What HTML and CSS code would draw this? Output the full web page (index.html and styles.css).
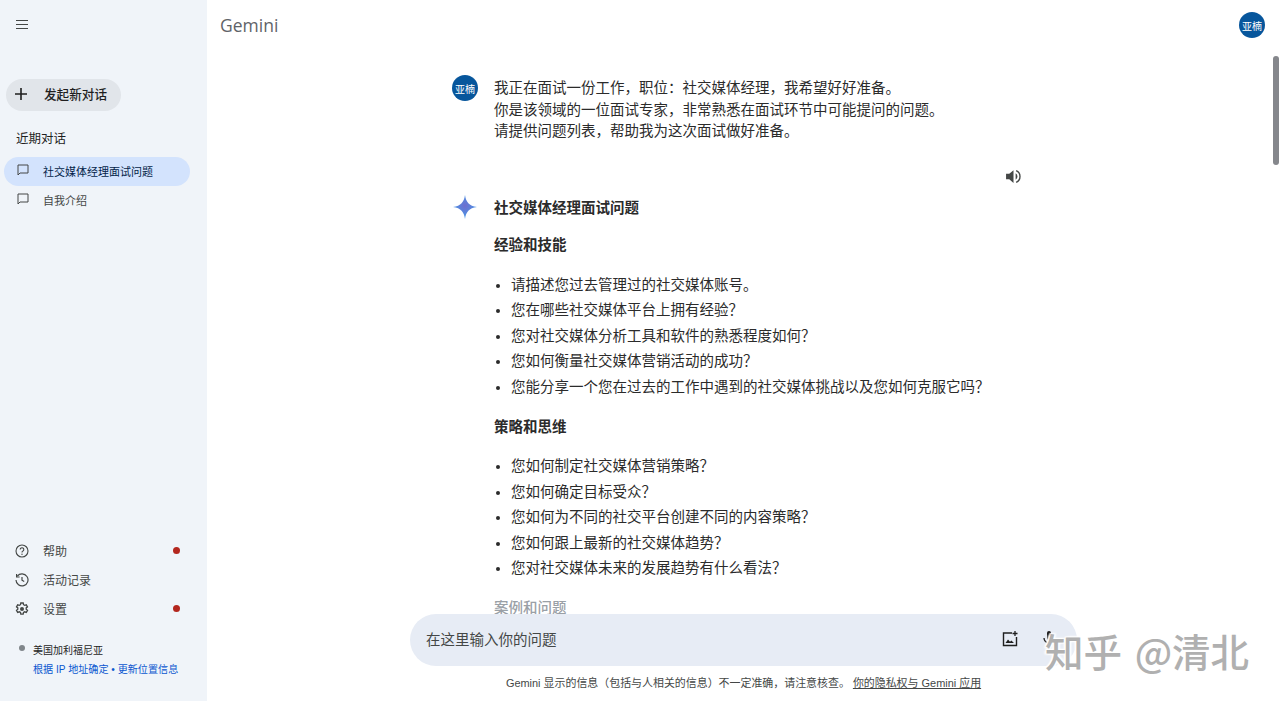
FILE: index.html
```html
<!DOCTYPE html>
<html lang="zh-CN">
<head>
  <meta charset="UTF-8" />
  <title>Gemini</title>
  <link rel="stylesheet" href="styles.css">
</head>
<body>
  <aside class="sidebar">
    <div class="menu-btn">
      <svg width="12" height="9" viewBox="0 0 12 9"><path d="M0 .5h12M0 4.500h12M0 8.500h12" stroke="#444746" stroke-width="1.200"/></svg>
    </div>
    <div class="new-chat">
      <svg width="14" height="14" viewBox="0 0 14 14"><path d="M7 1v12M1 7h12" stroke="#1f1f1f" stroke-width="1.600"/></svg>
      <span>发起新对话</span>
    </div>
    <div class="recent-title">近期对话</div>
    <div class="chat-item active">
      <svg class="chat-icon" width="12" height="12" viewBox="0 0 12 12"><path d="M1 1h10v8H3L1 11z" fill="none" stroke="#444746" stroke-width="1"/></svg>
      <span>社交媒体经理面试问题</span>
    </div>
    <div class="chat-item">
      <svg class="chat-icon" width="12" height="12" viewBox="0 0 12 12"><path d="M1 1h10v8H3L1 11z" fill="none" stroke="#444746" stroke-width="1"/></svg>
      <span>自我介绍</span>
    </div>

    <div class="side-bottom">
      <div class="side-link">
        <svg width="14" height="14" viewBox="0 0 14 14"><circle cx="7" cy="7" r="6" fill="none" stroke="#444746" stroke-width="1.100"/><path d="M5.200 5.500a1.800 1.800 0 1 1 2.700 1.600c-.6.300-.9.700-.9 1.300" fill="none" stroke="#444746" stroke-width="1.100"/><circle cx="7" cy="10.200" r=".7" fill="#444746"/></svg>
        <span>帮助</span>
        <i class="red-dot"></i>
      </div>
      <div class="side-link">
        <svg width="14" height="14" viewBox="0 0 14 14"><path d="M2.300 3.200A6 6 0 1 1 1 7" fill="none" stroke="#444746" stroke-width="1.200"/><path d="M1.600 1v3h3" fill="none" stroke="#444746" stroke-width="1.200"/><path d="M7 4v3.200l2.200 1.400" fill="none" stroke="#444746" stroke-width="1.200"/></svg>
        <span>活动记录</span>
      </div>
      <div class="side-link">
        <svg width="14" height="14" viewBox="0 0 14 14"><path d="M5.800 1h2.400l.3 1.700 1.200.7 1.600-.6 1.200 2-1.300 1.100v1.400l1.300 1.100-1.200 2-1.600-.6-1.200.7-.3 1.700H5.800l-.3-1.700-1.200-.7-1.600.6-1.200-2 1.300-1.100V5.900L1.500 4.800l1.200-2 1.600.6 1.200-.7z" fill="none" stroke="#444746" stroke-width="1.300"/><circle cx="7" cy="7" r="2" fill="#444746"/></svg>
        <span>设置</span>
        <i class="red-dot"></i>
      </div>
      <div class="location">
        <div class="loc-name"><i class="grey-dot"></i>美国加利福尼亚</div>
        <div class="loc-link">根据 IP 地址确定 • 更新位置信息</div>
      </div>
    </div>
  </aside>

  <main class="main">
    <header class="topbar">
      <div class="brand">Gemini</div>
      <div class="avatar">亚楠</div>
    </header>

    <div class="scroll-thumb"></div>

    <section class="conversation">
      <div class="prompt">
        <div class="avatar">亚楠</div>
        <p>我正在面试一份工作，职位：社交媒体经理，我希望好好准备。<br>你是该领域的一位面试专家，非常熟悉在面试环节中可能提问的问题。<br>请提供问题列表，帮助我为这次面试做好准备。</p>
      </div>
      <div class="speaker">
        <svg width="17" height="17" viewBox="0 0 16 16"><path d="M1 5.500h3L8 2v12L4 10.500H1z" fill="#444746"/><path d="M10 5a3.500 3.500 0 0 1 0 6z" fill="#444746"/><path d="M10.500 2.500a6 6 0 0 1 0 11" fill="none" stroke="#444746" stroke-width="1.300"/></svg>
      </div>
      <div class="answer">
        <svg class="spark" width="26" height="26" viewBox="0 0 26 26">
          <defs><radialGradient id="sparkFill" cx="0.500" cy="0.450" r="0.500"><stop offset="0" stop-color="#6f6ecf"/><stop offset="1" stop-color="#4a96e6"/></radialGradient></defs>
          <path d="M13 1c1 7 4 11 12 12-8 1-11 5-12 12-1-7-4-11-12-12 8-1 11-5 12-12z" fill="url(#sparkFill)"/>
        </svg>
        <div class="answer-body">
          <h2 class="first">社交媒体经理面试问题</h2>
          <h2>经验和技能</h2>
          <ul class="top">
            <li>请描述您过去管理过的社交媒体账号。</li>
            <li>您在哪些社交媒体平台上拥有经验？</li>
            <li>您对社交媒体分析工具和软件的熟悉程度如何？</li>
            <li>您如何衡量社交媒体营销活动的成功？</li>
            <li>您能分享一个您在过去的工作中遇到的社交媒体挑战以及您如何克服它吗？</li>
          </ul>
          <h2>策略和思维</h2>
          <ul class="last">
            <li>您如何制定社交媒体营销策略？</li>
            <li>您如何确定目标受众？</li>
            <li>您如何为不同的社交平台创建不同的内容策略？</li>
            <li>您如何跟上最新的社交媒体趋势？</li>
            <li>您对社交媒体未来的发展趋势有什么看法？</li>
          </ul>
          <h2 class="faded">案例和问题</h2>
        </div>
      </div>
    </section>

    <div class="composer">
      <div class="input-bar">
        <span class="placeholder">在这里输入你的问题</span>
        <svg class="image-icon" width="16" height="16" viewBox="0 0 16 16"><path d="M10 2H1.500v12.500h13V6" fill="none" stroke="#1f1f1f" stroke-width="1.400"/><path d="M3.500 12l2.500-3.500 2 2.300 1.300-1.300 2.700 2.500z" fill="#1f1f1f"/><path d="M13 0v5M10.500 2.500h5" stroke="#1f1f1f" stroke-width="1.300"/></svg>
        <svg class="mic-icon" width="14" height="18" viewBox="0 0 14 18"><rect x="5" y="1" width="4" height="9" rx="2" fill="#1f1f1f"/><path d="M2 8a5 5 0 0 0 10 0M7 13v4" fill="none" stroke="#1f1f1f" stroke-width="1.300"/></svg>
      </div>
      <p class="disclaimer">Gemini 显示的信息（包括与人相关的信息）不一定准确，请注意核查。 <a href="#">你的隐私权与 Gemini 应用</a></p>
    </div>

    <div class="watermark">知乎 @清北</div>
  </main>
</body>
</html>
```

FILE: styles.css
```css
* { box-sizing: border-box; }
html, body {
  height: 100%;
}
body {
  margin: 0;
  display: flex;
  height: 701px;
  overflow: hidden;
  background-color: #fff;
  color: #1f1f1f;
  font-family: "Liberation Sans", "Noto Sans CJK SC", sans-serif;
}

/* sidebar */
.sidebar {
  width: 207px;
  flex-shrink: 0;
  height: 100%;
  background-color: #f0f4f9;
  display: flex;
  flex-direction: column;
  padding: 19px 0 0 0;
}
.menu-btn {
  height: 10px;
  padding-left: 16px;
  display: flex;
  align-items: center;
}
.new-chat {
  margin: 50px 0 0 6px;
  width: 115px;
  height: 32px;
  border-radius: 16px;
  background-color: #e1e5ea;
  display: flex;
  align-items: center;
  gap: 16px;
  padding: 0 0 2px 8px;
  font-size: 12.600px;
  font-weight: 500;
  color: #1f1f1f;
}
.new-chat span {
  padding-bottom: 2px;
}
.recent-title {
  margin: 19px 0 0 16px;
  font-size: 12.500px;
  line-height: 18px;
  color: #1f1f1f;
}
.chat-item {
  margin: 9px 0 0 4px;
  width: 186px;
  height: 29px;
  border-radius: 15px;
  display: flex;
  align-items: center;
  padding: 0 0 2px 13px;
  gap: 14px;
  font-size: 11px;
  color: #444746;
}
.chat-item + .chat-item {
  margin-top: 0;
}
.chat-item.active {
  background-color: #d3e3fd;
  color: #041e49;
}
.chat-icon {
  margin-top: -2px;
}
.side-bottom {
  margin-top: auto;
  padding-bottom: 24px;
}
.side-link {
  height: 29px;
  display: flex;
  align-items: center;
  gap: 14px;
  padding: 0 27px 0 15px;
  font-size: 12px;
  color: #444746;
}
.red-dot {
  margin-left: auto;
  width: 7px;
  height: 7px;
  border-radius: 50%;
  background-color: #b3261e;
}
.location {
  margin-top: 21px;
  padding-left: 33px;
  font-size: 10px;
  line-height: 14px;
}
.loc-name {
  position: relative;
  color: #1f1f1f;
}
.grey-dot {
  position: absolute;
  left: -14px;
  top: 1px;
  width: 6px;
  height: 6px;
  border-radius: 50%;
  background-color: #80868b;
}
.loc-link {
  margin-top: 5px;
  font-size: 10.100px;
  color: #0b57d0;
}

/* main column */
.main {
  flex: 1;
  position: relative;
  display: flex;
  flex-direction: column;
  min-width: 0;
  height: 100%;
}
.topbar {
  height: 50px;
  flex-shrink: 0;
  display: flex;
  align-items: center;
  justify-content: space-between;
  padding: 0 15px 0 13px;
}
.brand {
  font-family: "Open Sans", sans-serif;
  font-size: 17.500px;
  color: #5f6368;
}
.avatar {
  width: 26px;
  height: 26px;
  flex-shrink: 0;
  border-radius: 50%;
  background-color: #07569c;
  color: #fff;
  font-size: 10px;
  display: flex;
  align-items: center;
  justify-content: center;
}
.scroll-thumb {
  position: absolute;
  top: 56px;
  right: 1px;
  width: 6px;
  height: 109px;
  border-radius: 3px;
  background-color: #85878c;
}

/* conversation */
.conversation {
  flex: 1;
  min-height: 0;
  overflow: hidden;
  margin-left: 245px;
  width: 570px;
  font-size: 14.500px;
  color: #2b2b2b;
}
.prompt {
  display: flex;
  gap: 16px;
  margin-top: 25px;
}
.prompt p {
  margin: 3px 0 0 0;
  line-height: 21.500px;
}
.speaker {
  height: 17px;
  margin-top: 25px;
  padding-left: 553px;
}
.answer {
  display: flex;
  margin-top: 6px;
  gap: 16px;
}
.spark {
  flex-shrink: 0;
  margin-top: 3px;
}
.answer-body {
  flex: 1;
}
.answer-body h2 {
  font-size: 14.500px;
  font-weight: 700;
  line-height: 21px;
  margin: 0;
}
.answer-body h2.first {
  margin-top: 7px;
  margin-bottom: 16px;
}
.answer-body h2.faded {
  font-weight: 500;
  color: #9aa0a6;
}
.answer-body ul {
  margin: 16.500px 0 17px 0;
  padding-left: 17px;
  list-style: disc;
}
.answer-body ul.top {
  margin: 17px 0 16.500px 0;
}
.answer-body ul.last {
  margin-bottom: 16px;
}
.answer-body li {
  line-height: 25.500px;
}

/* composer */
.composer {
  position: absolute;
  left: 0;
  right: 0;
  top: 614px;
  bottom: 0;
  background-color: #fff;
  padding-left: 203px;
}
.input-bar {
  width: 667px;
  height: 52px;
  border-radius: 26px;
  background-color: #e7ecf5;
  display: flex;
  align-items: center;
  padding: 0 0 2px 16px;
}
.placeholder {
  font-size: 14.500px;
  color: #444746;
  flex: 1;
  padding-bottom: 2px;
}
.image-icon {
  margin-right: 24px;
}
.mic-icon {
  margin-right: 21px;
}
.disclaimer {
  width: 667px;
  margin: 10px 0 0 0;
  font-size: 10.950px;
  line-height: 15px;
  text-align: center;
  color: #444746;
}
.disclaimer a {
  color: #444746;
}
/* white halo of the stamped watermark bites into whatever is under it */
.watermark {
  position: absolute;
  left: 838px;
  top: 624px;
  font-family: "Noto Sans CJK SC", sans-serif;
  font-size: 38.500px;
  font-weight: 500;
  word-spacing: 4px;
  line-height: 52px;
  white-space: nowrap;
  color: #b0b0b0;
  text-shadow: -1px -1px 1px #fff, 1px 1px 1px #fff, -2px 1px 2px #fff, 2px -1px 2px #fff;
}
```
